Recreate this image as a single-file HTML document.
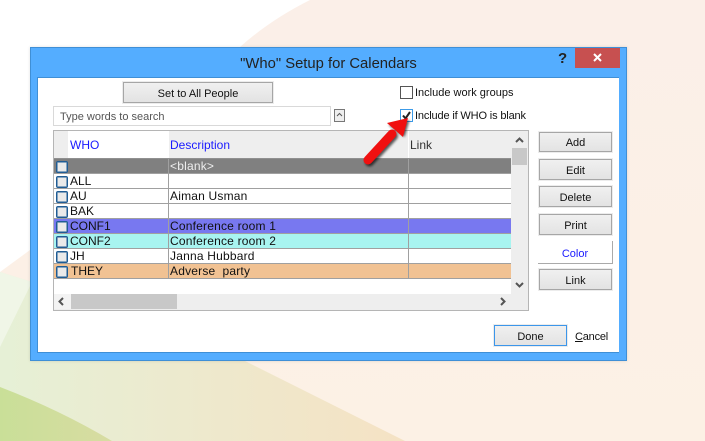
<!DOCTYPE html>
<html><head><meta charset="utf-8"><style>
html,body{margin:0;padding:0}
body{width:705px;height:441px;overflow:hidden;position:relative;font-family:"Liberation Sans",sans-serif;font-size:12px;color:#111}
div,span{position:absolute;box-sizing:border-box;white-space:nowrap}
.btn{background:linear-gradient(#f0f0f0,#e3e3e3);border:1px solid #a6a6a6;outline:1px solid #ececec;text-align:center;line-height:23px;color:#111;font-size:11px}
.row{left:54px;width:457px;height:15px;border-bottom:1px solid #a0a0a0;background:#fff}
.row .a{left:16px;top:0;line-height:14px}
.row .b{left:116px;top:0;line-height:14px;letter-spacing:.2px}
.row i{position:absolute;top:0;width:1px;height:15px;background:#a0a0a0}
.cb{left:2px;top:2px;width:12px;height:12px;border:1px solid #1f5c94;border-radius:2px;background:#eaeaea;box-shadow:inset 0 0 0 .5px #1f5c94}
</style></head><body>
<svg width="705" height="441" style="position:absolute;left:0;top:0">
<defs>
<linearGradient id="p" x1="0" y1="0" x2="0" y2="1"><stop offset="0" stop-color="#fbefe8"/><stop offset="1" stop-color="#fcf1e5"/></linearGradient>
<linearGradient id="w" x1="0" y1="0" x2="1" y2="0"><stop offset="0" stop-color="#e6f0d6"/><stop offset="1" stop-color="#f5e2c4"/></linearGradient>
<linearGradient id="g" x1="0" y1="0" x2="1" y2="0"><stop offset="0" stop-color="#c9df98"/><stop offset="1" stop-color="#d8dca2"/></linearGradient>
</defs>
<rect width="705" height="441" fill="url(#p)"/>
<path d="M0,0H310Q270,20 240,47L180,140L0,272Z" fill="#fff"/>
<path d="M180,47H240L0,272Z" fill="#fff"/>
<path d="M0,272L32,282L245,361L405,441H0Z" fill="url(#w)"/>
<path d="M0,272L32,282L0,347Z" fill="#f0f6e7"/>
<path d="M0,387Q60,410 112,441H0Z" fill="url(#g)"/>
</svg>

<div style="left:30px;top:47px;width:597px;height:314px;background:#54adff;border:1px solid #3f8fd6;box-shadow:0 0 3px rgba(0,0,0,.12)"></div>
<div style="left:37px;top:77px;width:582px;height:276px;background:#fff;border:1px solid #3f8fd6;border-right:0"></div>
<div style="left:30px;top:55px;width:597px;text-align:center;font-size:14.8px;line-height:18px;color:#222">"Who" Setup for Calendars</div>
<div style="left:558px;top:51px;font-weight:bold;font-size:15px;line-height:16px;color:#222">?</div>
<div style="left:575px;top:48px;width:45px;height:20px;background:#c75050"></div>
<svg width="45" height="20" style="position:absolute;left:575px;top:48px"><path d="M19,6L26,13M26,6L19,13" stroke="#fff" stroke-width="2"/></svg>

<div class="btn" style="left:123px;top:82px;width:150px;height:21px">Set to All People</div>
<div style="left:53px;top:106px;width:278px;height:20px;border:1px solid #d9d9d9;background:#fff;color:#555;padding-left:6px;line-height:20px;font-size:11px">Type words to search</div>
<div style="left:334px;top:109px;width:11px;height:13px;border:1px solid #777;background:#eee"></div>
<svg width="11" height="13" style="position:absolute;left:334px;top:109px"><path d="M3,7L5.500,4.500L8,7" stroke="#555" fill="none"/></svg>

<div style="left:400px;top:86px;width:13px;height:13px;border:1px solid #555;background:#fff"></div>
<div style="left:415px;top:86px;line-height:14px;color:#111;font-size:11px">Include work groups</div>
<div style="left:400px;top:109px;width:13px;height:13px;border:1px solid #3c9be8;background:#fff"></div>
<svg width="13" height="13" style="position:absolute;left:400px;top:109px"><path d="M3,6.500L5.500,9.500L10,3" stroke="#222" stroke-width="2" fill="none"/></svg>
<div style="left:415px;top:109px;line-height:14px;color:#111;font-size:11px;letter-spacing:-.15px">Include if WHO is blank</div>

<div style="left:53px;top:130px;width:476px;height:181px;border:1px solid #b5b5b5;background:#fff"></div>
<div style="left:54px;top:131px;width:474px;height:27px;background:#eee"></div>
<div style="left:68px;top:131px;width:100px;height:27px;background:#fff"></div>
<div style="left:168px;top:131px;width:1px;height:27px;background:#fff"></div>
<div style="left:408px;top:131px;width:1px;height:27px;background:#fff"></div>
<div style="left:70px;top:138px;line-height:14px;color:#1a1aff">WHO</div>
<div style="left:170px;top:138px;line-height:14px;color:#1a1aff">Description</div>
<div style="left:410px;top:138px;line-height:14px;color:#333">Link</div>
<div style="left:54px;top:158px;width:457px;height:1px;background:#909090"></div>

<div class="row" style="top:159px;background:#808080"><i style="left:114px"></i><i style="left:354px"></i><div class="cb"></div><span class="b" style="color:#eee">&lt;blank&gt;</span></div>
<div class="row" style="top:174px"><i style="left:114px"></i><i style="left:354px"></i><div class="cb"></div><span class="a">ALL</span></div>
<div class="row" style="top:189px"><i style="left:114px"></i><i style="left:354px"></i><div class="cb"></div><span class="a">AU</span><span class="b">Aiman Usman</span></div>
<div class="row" style="top:204px"><i style="left:114px"></i><i style="left:354px"></i><div class="cb"></div><span class="a">BAK</span></div>
<div class="row" style="top:219px;background:#7878f0"><i style="left:114px"></i><i style="left:354px"></i><div class="cb"></div><span class="a">CONF1</span><span class="b">Conference room 1</span></div>
<div class="row" style="top:234px;background:#a8f4f0"><i style="left:114px"></i><i style="left:354px"></i><div class="cb"></div><span class="a">CONF2</span><span class="b">Conference room 2</span></div>
<div class="row" style="top:249px"><i style="left:114px"></i><i style="left:354px"></i><div class="cb"></div><span class="a">JH</span><span class="b">Janna Hubbard</span></div>
<div class="row" style="top:264px;background:#f1c293"><i style="left:114px"></i><i style="left:354px"></i><div class="cb"></div><span class="a" style="left:17px">THEY</span><span class="b">Adverse&nbsp; party</span></div>

<div style="left:511px;top:131px;width:17px;height:179px;background:#eee"></div>
<div style="left:54px;top:294px;width:474px;height:16px;background:#eee"></div>
<div style="left:54px;top:294px;width:17px;height:15px;background:#f3f3f3"></div>
<div style="left:71px;top:294px;width:106px;height:15px;background:#c8c8c8"></div>
<div style="left:512px;top:148px;width:15px;height:17px;background:#c8c8c8"></div>
<svg width="705" height="441" style="position:absolute;left:0;top:0" fill="none" stroke="#555" stroke-width="2">
<path d="M516,142L519.500,138.500L523,142"/>
<path d="M516,283L519.500,286.500L523,283"/>
<path d="M63,298L59.500,301.500L63,305"/>
<path d="M501,298L504.500,301.500L501,305"/>
</svg>

<div class="btn" style="left:539px;top:132px;width:73px;height:20px;line-height:20px">Add</div>
<div class="btn" style="left:539px;top:159px;width:73px;height:21px">Edit</div>
<div class="btn" style="left:539px;top:186px;width:73px;height:21px">Delete</div>
<div class="btn" style="left:539px;top:214px;width:73px;height:21px">Print</div>
<div style="left:538px;top:241px;width:75px;height:23px;background:#fff;border-right:1px solid #aaa;border-bottom:1px solid #aaa;text-align:center;line-height:26px;color:#1a1aff;font-size:11px">Color</div>
<div class="btn" style="left:539px;top:269px;width:73px;height:21px">Link</div>
<div class="btn" style="left:494px;top:325px;width:73px;height:21px;border:1px solid #3c96ea;line-height:22px">Done</div>
<div style="left:575px;top:330px;line-height:14px;color:#111;font-size:11px;letter-spacing:-.2px"><u>C</u>ancel</div>

<svg width="705" height="441" style="position:absolute;left:0;top:0">
<defs><filter id="b" x="-30%" y="-30%" width="160%" height="160%"><feGaussianBlur stdDeviation="1.2"/></filter></defs>
<g transform="translate(1.500,2)" opacity=".65" filter="url(#b)"><path d="M368,160L392,134" stroke="#000" stroke-width="9" stroke-linecap="round"/><path d="M408,118L387,123L403,135Z" fill="#000"/></g>
<path d="M368,160L392,134" stroke="#f01010" stroke-width="9" stroke-linecap="round"/>
<path d="M408,118L387,123L403,137Z" fill="#f01010"/>
</svg>
</body></html>
